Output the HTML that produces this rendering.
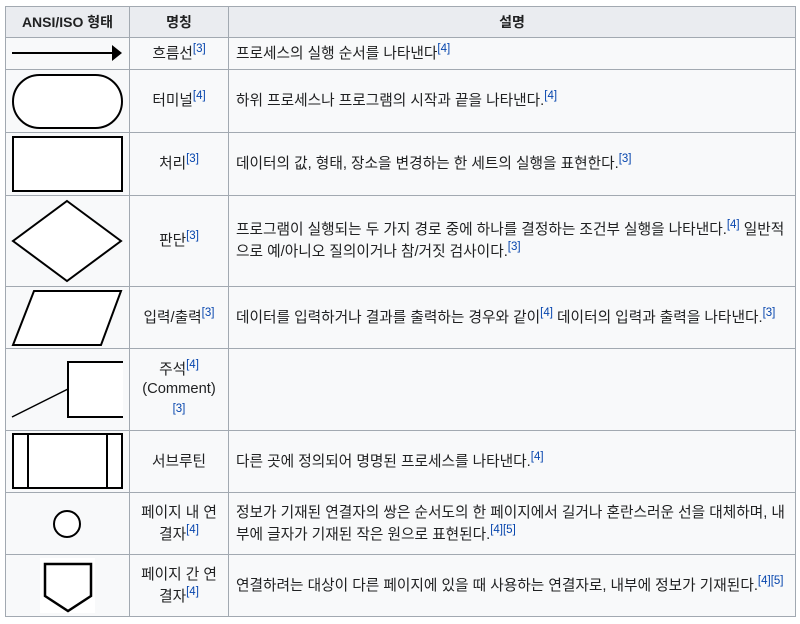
<!DOCTYPE html>
<html><head><meta charset="utf-8"><style>
body{margin:0;width:800px;height:624px;background:#fff;font-family:"Liberation Sans","Noto Sans CJK KR",sans-serif;font-size:14.7px;color:#202122;position:relative;overflow:hidden}
.c{position:absolute;box-sizing:border-box;border:1px solid #a2a9b1;background:#f8f9fa;display:flex;align-items:center;line-height:22px}
.h{background:#eaecf0;font-weight:bold;justify-content:center;font-size:14px}
.n{justify-content:center;text-align:center;padding:0 6px}
.d{padding:0 7px}
sup{color:#0645ad;font-size:11.5px;line-height:0;vertical-align:super}
svg{position:absolute}
</style></head><body>
<div class="c h" style="left:5px;top:6px;width:125px;height:32px">ANSI/ISO 형태</div>
<div class="c h" style="left:129px;top:6px;width:100px;height:32px">명칭</div>
<div class="c h" style="left:228px;top:6px;width:568px;height:32px">설명</div>

<div class="c" style="left:5px;top:37px;width:125px;height:33px"></div>
<div class="c n" style="left:129px;top:37px;width:100px;height:33px"><span>흐름선<sup>[3]</sup></span></div>
<div class="c d" style="left:228px;top:37px;width:568px;height:33px"><span>프로세스의 실행 순서를 나타낸다<sup>[4]</sup></span></div>

<div class="c" style="left:5px;top:69px;width:125px;height:64px"></div>
<div class="c n" style="left:129px;top:69px;width:100px;height:64px"><span>터미널<sup>[4]</sup></span></div>
<div class="c d" style="left:228px;top:69px;width:568px;height:64px"><span>하위 프로세스나 프로그램의 시작과 끝을 나타낸다.<sup>[4]</sup></span></div>

<div class="c" style="left:5px;top:132px;width:125px;height:64px"></div>
<div class="c n" style="left:129px;top:132px;width:100px;height:64px"><span>처리<sup>[3]</sup></span></div>
<div class="c d" style="left:228px;top:132px;width:568px;height:64px"><span>데이터의 값, 형태, 장소을 변경하는 한 세트의 실행을 표현한다.<sup>[3]</sup></span></div>

<div class="c" style="left:5px;top:195px;width:125px;height:92px"></div>
<div class="c n" style="left:129px;top:195px;width:100px;height:92px"><span>판단<sup>[3]</sup></span></div>
<div class="c d" style="left:228px;top:195px;width:568px;height:92px"><span>프로그램이 실행되는 두 가지 경로 중에 하나를 결정하는 조건부 실행을 나타낸다.<sup>[4]</sup> 일반적<br>으로 예/아니오 질의이거나 참/거짓 검사이다.<sup>[3]</sup></span></div>

<div class="c" style="left:5px;top:286px;width:125px;height:63px"></div>
<div class="c n" style="left:129px;top:286px;width:100px;height:63px"><span>입력/출력<sup>[3]</sup></span></div>
<div class="c d" style="left:228px;top:286px;width:568px;height:63px"><span>데이터를 입력하거나 결과를 출력하는 경우와 같이<sup>[4]</sup> 데이터의 입력과 출력을 나타낸다.<sup>[3]</sup></span></div>

<div class="c" style="left:5px;top:348px;width:125px;height:83px"></div>
<div class="c n" style="left:129px;top:348px;width:100px;height:83px;line-height:19px"><span>주석<sup>[4]</sup><br>(Comment)<br><sup style="vertical-align:baseline">[3]</sup></span></div>
<div class="c d" style="left:228px;top:348px;width:568px;height:83px"></div>

<div class="c" style="left:5px;top:430px;width:125px;height:63px"></div>
<div class="c n" style="left:129px;top:430px;width:100px;height:63px"><span>서브루틴</span></div>
<div class="c d" style="left:228px;top:430px;width:568px;height:63px"><span>다른 곳에 정의되어 명명된 프로세스를 나타낸다.<sup>[4]</sup></span></div>

<div class="c" style="left:5px;top:492px;width:125px;height:63px"></div>
<div class="c n" style="left:129px;top:492px;width:100px;height:63px"><span>페이지 내 연<br>결자<sup>[4]</sup></span></div>
<div class="c d" style="left:228px;top:492px;width:568px;height:63px"><span>정보가 기재된 연결자의 쌍은 순서도의 한 페이지에서 길거나 혼란스러운 선을 대체하며, 내<br>부에 글자가 기재된 작은 원으로 표현된다.<sup>[4][5]</sup></span></div>

<div class="c" style="left:5px;top:554px;width:125px;height:63px"></div>
<div class="c n" style="left:129px;top:554px;width:100px;height:63px"><span>페이지 간 연<br>결자<sup>[4]</sup></span></div>
<div class="c d" style="left:228px;top:554px;width:568px;height:63px"><span>연결하려는 대상이 다른 페이지에 있을 때 사용하는 연결자로, 내부에 정보가 기재된다.<sup>[4][5]</sup></span></div>

<svg width="800" height="624" style="left:0;top:0">
<g stroke="#000" stroke-width="2" fill="#fff">
<line x1="12" y1="53" x2="112" y2="53"/>
<polygon points="112,45 122,53 112,61" fill="#000" stroke="none"/>
<rect x="13" y="75" width="109" height="53" rx="26.5"/>
<rect x="13" y="137" width="109" height="54"/>
<polygon points="67,201 121,241 67,281 13,241"/>
<polygon points="34,291 121,291 101,345 13,345"/>
<polyline points="123,362 68,362 68,417 123,417" fill="#fff"/>
<line x1="12" y1="417" x2="68" y2="389" stroke-width="1.5"/>
<rect x="13" y="434" width="109" height="54"/>
<line x1="28" y1="434" x2="28" y2="488"/>
<line x1="107" y1="434" x2="107" y2="488"/>
<circle cx="67" cy="524" r="13"/>
<rect x="40" y="558" width="55" height="55" fill="#fff" stroke="none"/>
<polygon points="45,564 91,564 91,596 68,611 45,596" stroke-width="2.5"/>
</g>
</svg>
</body></html>
